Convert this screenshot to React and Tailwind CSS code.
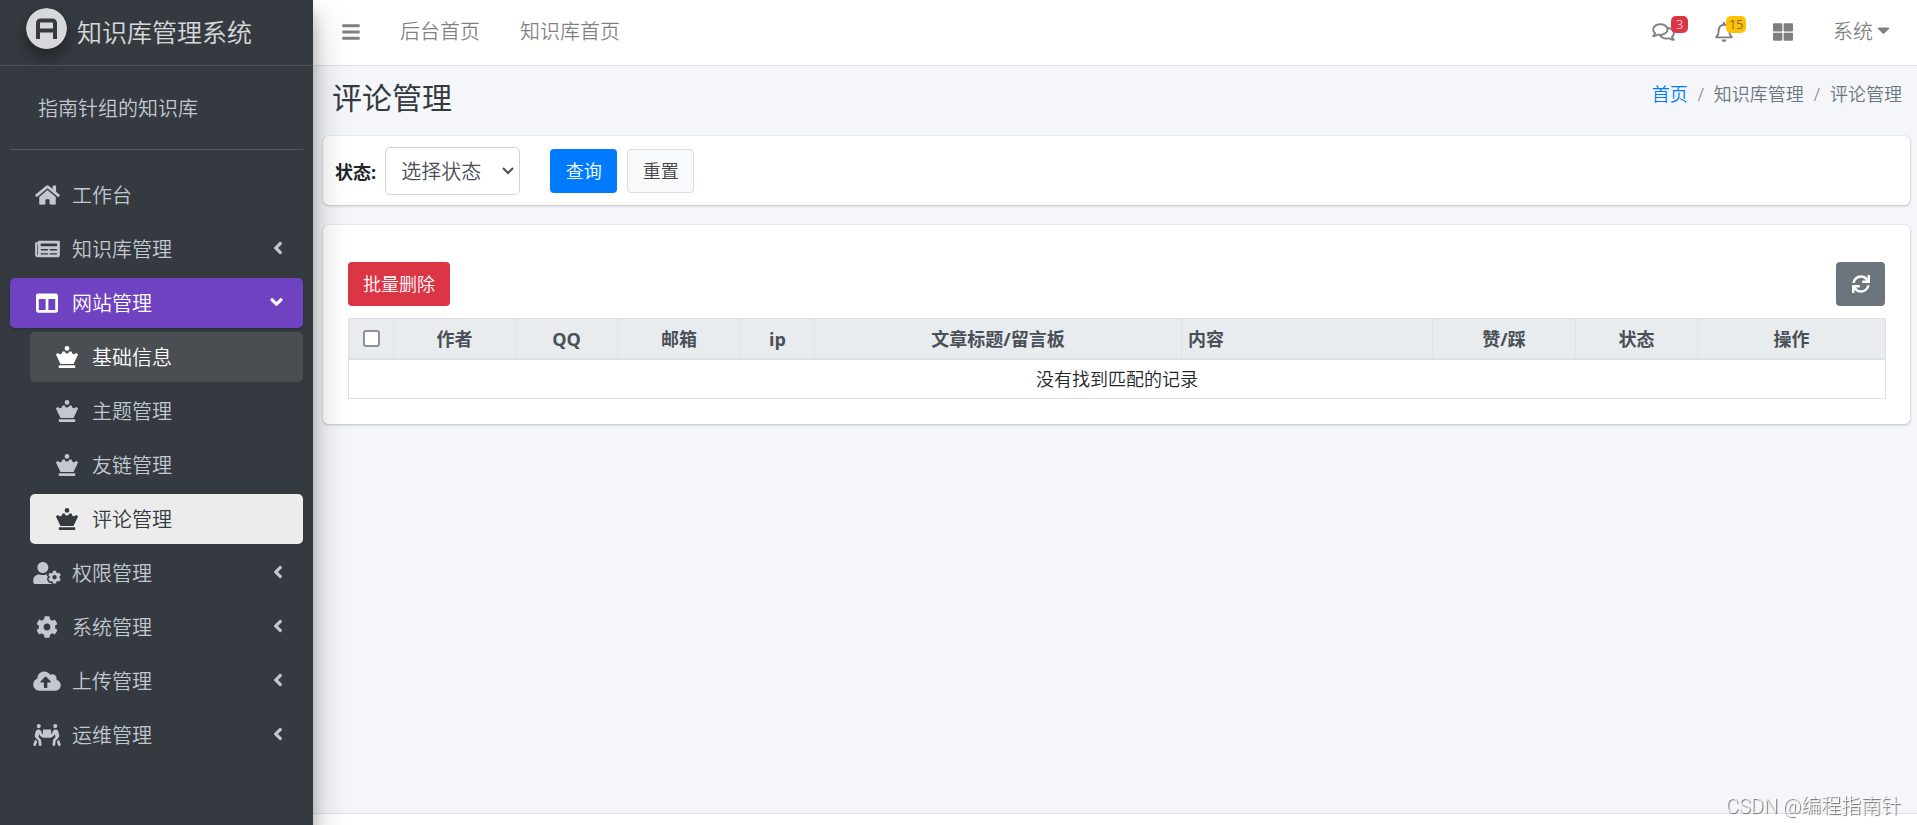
import React, { useState } from "react";
import {
    FaAngleDown,
    FaAngleLeft,
    FaBars,
    FaCaretDown,
    FaChessQueen,
    FaCloudUploadAlt,
    FaCog,
    FaColumns,
    FaHome,
    FaNewspaper,
    FaPeopleCarry,
    FaRegBell,
    FaRegComments,
    FaSync,
    FaThLarge,
    FaUserCog,
} from "react-icons/fa";

const menus = [
    { label: "工作台", icon: FaHome, iconWidth: "w-[25px]" },
    { label: "知识库管理", icon: FaNewspaper, iconWidth: "w-[25px]", tree: true },
    {
        label: "网站管理",
        icon: FaColumns,
        iconWidth: "w-[22px]",
        tree: true,
        open: true,
        children: [
            { label: "基础信息", state: "hover" },
            { label: "主题管理", state: "normal" },
            { label: "友链管理", state: "normal" },
            { label: "评论管理", state: "active" },
        ],
    },
    { label: "权限管理", icon: FaUserCog, iconWidth: "w-[28px]", tree: true },
    { label: "系统管理", icon: FaCog, iconWidth: "w-[22px]", tree: true },
    { label: "上传管理", icon: FaCloudUploadAlt, iconWidth: "w-[28px]", tree: true },
    { label: "运维管理", icon: FaPeopleCarry, iconWidth: "w-[28px]", tree: true },
];

const childStyles = {
    normal: "text-[#c2c7d0]",
    hover: "bg-[#494e52] text-white",
    active: "bg-[#ebeceb] text-[#343a40]",
};

const columns = [
    { label: "作者", width: "w-[122px]" },
    { label: "QQ", width: "w-[102px]" },
    { label: "邮箱", width: "w-[123px]" },
    { label: "ip", width: "w-[74px]" },
    { label: "文章标题/留言板", width: "w-[367px]" },
    { label: "内容", width: "w-[251px]", left: true },
    { label: "赞/踩", width: "w-[143px]" },
    { label: "状态", width: "w-[122px]" },
    { label: "操作", width: "w-[188px]" },
];

function Logo() {
    return (
        <svg viewBox="0 0 41 41" className="size-[41px] shrink-0 rounded-full shadow-[0_8px_16px_rgba(0,0,0,0.4)]">
            <circle cx="20.5" cy="20.5" r="20.5" fill="#d6d8d9" />
            <path d="M12 31V15a2.500 2.500 0 0 1 2.500-2.500h12a2.500 2.500 0 0 1 2.500 2.500V31M12 22.500h17" fill="none" stroke="#343a40" strokeWidth="4" />
        </svg>
    );
}

function MenuIcon({ icon: Icon, width }) {
    return (
        <span className="flex w-[34px] justify-center">
            <Icon className={`h-[22px] ${width}`} />
        </span>
    );
}

function Sidebar() {
    return (
        <aside className="relative z-10 w-[313px] shrink-0 bg-[#343a40] text-[#c2c7d0] shadow-[0_18px_35px_rgba(0,0,0,0.25),0_13px_13px_rgba(0,0,0,0.22)]">
            <a href="#" className="flex h-[66px] items-center gap-2.5 border-b border-[#4b545c] pb-2 pl-[26px] text-[25px] text-white/80">
                <Logo />
                <span className="pt-1.5">知识库管理系统</span>
            </a>
            <div className="mx-2.5 flex h-[84px] items-center border-b border-[#4f5962] pt-0.5 pl-7">
                <a href="#">指南针组的知识库</a>
            </div>
            <nav className="mt-5 px-2.5">
                <ul className="flex flex-col gap-1">
                    {menus.map(({ label, icon, iconWidth, tree, open, children }) => (
                        <li key={label}>
                            <a
                                href="#"
                                className={`flex h-[50px] items-center gap-2 rounded-[5px] px-5 ${open ? "bg-[#6f42c1] text-white shadow-[0_1px_3px_rgba(0,0,0,0.24)]" : ""}`}
                            >
                                <MenuIcon icon={icon} width={iconWidth} />
                                <span className="flex-1 pt-0.5">{label}</span>
                                {tree && (open ? <FaAngleDown className="mb-0.5 w-[13px]" /> : <FaAngleLeft className="mb-0.5 w-2.5" />)}
                            </a>
                            {children && (
                                <ul className="mt-1 flex flex-col gap-1 pl-5">
                                    {children.map((child) => (
                                        <li key={child.label}>
                                            <a href="#" className={`flex h-[50px] items-center gap-2 rounded-[5px] px-5 ${childStyles[child.state]}`}>
                                                <MenuIcon icon={FaChessQueen} width="w-[22px]" />
                                                <span className="pt-0.5">{child.label}</span>
                                            </a>
                                        </li>
                                    ))}
                                </ul>
                            )}
                        </li>
                    ))}
                </ul>
            </nav>
        </aside>
    );
}

function Navbar() {
    return (
        <header className="flex h-[66px] items-center justify-between border-b border-[#dee2e6] bg-white pr-[7px] pb-0.5 pl-[9px] text-black/50">
            <nav className="flex items-center">
                <button type="button" aria-label="菜单" className="px-5"><FaBars className="w-[18px]" /></button>
                <a href="#" className="px-5">后台首页</a>
                <a href="#" className="px-5">知识库首页</a>
            </nav>
            <div className="flex items-center">
                <a href="#" aria-label="消息" className="relative px-5">
                    <FaRegComments className="w-[23px]" />
                    <span className="absolute -top-1.5 right-[7px] rounded-[5px] bg-[#dc3545] px-[5px] text-[12px] leading-[17px] text-white">3</span>
                </a>
                <a href="#" aria-label="通知" className="relative px-5">
                    <FaRegBell className="w-[18px]" />
                    <span className="absolute -top-1.5 right-[7px] rounded-[5px] bg-[#ffc107] px-[3px] text-[12px] leading-[17px] text-[#1f2d3d]">15</span>
                </a>
                <a href="#" aria-label="应用" className="px-5"><FaThLarge /></a>
                <button type="button" className="flex items-center gap-1 px-5">
                    系统 <FaCaretDown className="mb-1 w-[13px]" />
                </button>
            </div>
        </header>
    );
}

function SearchForm() {
    return (
        <form className="flex items-center rounded-[5px] bg-white px-3 pt-[11px] pb-2.5 shadow-[0_0_1px_rgba(0,0,0,0.25),0_1px_3px_rgba(0,0,0,0.2)]">
            <label htmlFor="status" className="pt-0.5 text-[18px] font-bold text-[#212529]">状态:</label>
            <div className="relative ml-[9px]">
                <select id="status" className="h-12 w-[135px] appearance-none rounded-[5px] border border-[#ced4da] bg-white pt-0.5 pl-[15px] text-[#495057]">
                    <option>选择状态</option>
                </select>
                <svg viewBox="0 0 12 8" className="pointer-events-none absolute top-5 right-1.5 w-3">
                    <path d="M1 1l5 5 5-5" fill="none" stroke="#495057" strokeWidth="2" />
                </svg>
            </div>
            <button type="button" className="ml-[30px] h-11 w-[67px] rounded-[4px] bg-[#007bff] text-[18px] text-white">查询</button>
            <button type="reset" className="ml-2.5 h-11 w-[67px] rounded-[4px] border border-[#ddd] bg-[#f8f9fa] text-[18px] text-[#444]">重置</button>
        </form>
    );
}

function CommentTable() {
    const [checked, setChecked] = useState(false);

    return (
        <section className="mt-5 rounded-[5px] bg-white px-[25px] pt-[37px] pb-[25px] text-[18px] shadow-[0_0_1px_rgba(0,0,0,0.25),0_1px_3px_rgba(0,0,0,0.2)]">
            <div className="mb-3 flex justify-between">
                <button type="button" className="h-11 rounded-[4px] bg-[#dc3545] px-[15px] text-white">批量删除</button>
                <button type="button" aria-label="刷新" className="flex h-11 w-[49px] items-center justify-center rounded-[4px] bg-[#6c757d] text-white">
                    <FaSync />
                </button>
            </div>
            <table className="w-full table-fixed border-collapse border border-[#dee2e6] text-[#212529]">
                <thead className="bg-[#e9ecef] text-[#495057]">
                    <tr className="h-10 border-b-2 border-[#dee2e6]">
                        <th className="w-[45px] border-r border-[#dee2e6]">
                            <input
                                type="checkbox"
                                aria-label="全选"
                                className="mx-auto block size-[17px] appearance-none rounded-[3px] border-2 border-[#8f8f9d] bg-white checked:bg-[#007bff]"
                                checked={checked}
                                onChange={() => setChecked(!checked)}
                            />
                        </th>
                        {columns.map((item) => (
                            <th key={item.label} className={`border-r border-[#dee2e6] px-1.5 pt-0.5 font-bold ${item.width} ${item.left ? "text-left" : "text-center"}`}>
                                {item.label}
                            </th>
                        ))}
                    </tr>
                </thead>
                <tbody>
                    <tr className="h-10">
                        <td colSpan={10} className="text-center">没有找到匹配的记录</td>
                    </tr>
                </tbody>
            </table>
        </section>
    );
}

function App() {
    return (
        <div className="flex min-h-screen bg-[#f4f6f9] font-['Open_Sans','Noto_Sans_CJK_SC',sans-serif] text-[20px] leading-[30px] font-[350]">
            <Sidebar />
            <div className="flex min-w-0 flex-1 flex-col">
                <Navbar />
                <main className="flex-1 pr-[7px] pl-2.5">
                    <div className="flex h-[70px] items-start justify-between pt-3.5 pr-2 pl-[9px]">
                        <h1 className="text-[30px] leading-9 font-normal text-[#343a40]">评论管理</h1>
                        <ol className="flex gap-2.5 text-[18px] leading-7 text-[#6c757d]">
                            <li><a href="#" className="text-[#007bff]">首页</a></li>
                            <li>/</li>
                            <li>知识库管理</li>
                            <li>/</li>
                            <li>评论管理</li>
                        </ol>
                    </div>
                    <SearchForm />
                    <CommentTable />
                </main>
                <footer className="h-3 border-t border-[#dee2e6] bg-white" />
            </div>
            <div className="fixed right-4 bottom-1 z-20 font-[Roboto,'Noto_Sans_CJK_SC',sans-serif] font-light text-white/80 [text-shadow:1px_1px_1px_#666]">
                CSDN @编程指南针
            </div>
        </div>
    );
}

export default App;
